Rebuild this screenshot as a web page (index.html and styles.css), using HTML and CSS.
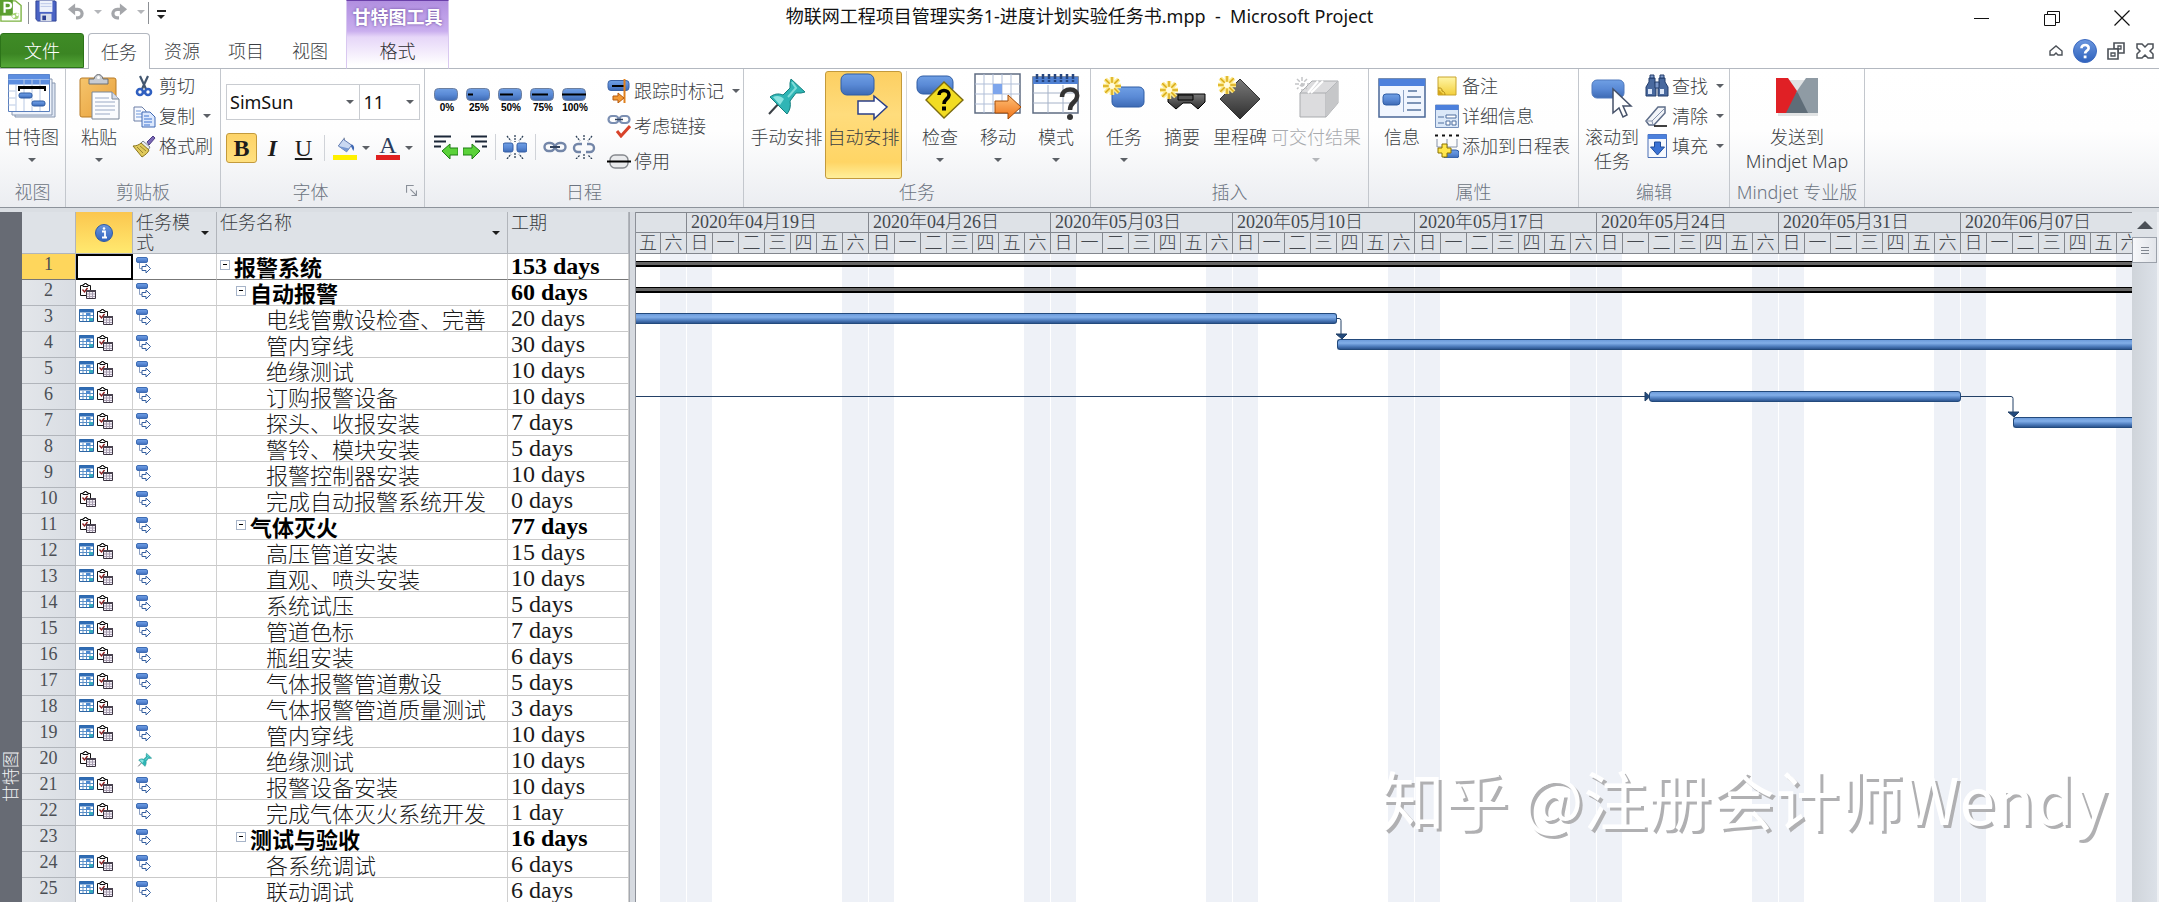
FILE: index.html
```html
<!DOCTYPE html>
<html lang="zh-CN">
<head>
<meta charset="utf-8">
<title>物联网工程项目管理实务1-进度计划实验任务书.mpp - Microsoft Project</title>
<link rel="stylesheet" href="styles.css">
</head>
<body>
<svg class="sprite" aria-hidden="true">
  <defs>
    <linearGradient id="gBlue" x1="0" y1="0" x2="0" y2="1"><stop offset="0" stop-color="#6f9fe4"/><stop offset=".5" stop-color="#5a8ad6"/><stop offset="1" stop-color="#3d6ab4"/></linearGradient>
    <linearGradient id="gPaste" x1="0" y1="0" x2="1" y2="1"><stop offset="0" stop-color="#f6c56c"/><stop offset="1" stop-color="#e79f3a"/></linearGradient>
    <linearGradient id="gYellow" x1="0" y1="0" x2="0" y2="1"><stop offset="0" stop-color="#fff6a8"/><stop offset="1" stop-color="#f3cf3b"/></linearGradient>
    <linearGradient id="gOrange" x1="0" y1="0" x2="0" y2="1"><stop offset="0" stop-color="#ffc27a"/><stop offset="1" stop-color="#ee7218"/></linearGradient>
    <linearGradient id="gDark" x1="0" y1="0" x2="0" y2="1"><stop offset="0" stop-color="#7a7a7a"/><stop offset="1" stop-color="#2e2e2e"/></linearGradient>
    <linearGradient id="gHelp" x1="0" y1="0" x2="0" y2="1"><stop offset="0" stop-color="#6b97df"/><stop offset="1" stop-color="#2f62bd"/></linearGradient>
  </defs>
  <symbol id="spark" viewBox="0 0 16 16"><path d="M8 0v16M0 8h16M2 2l12 12M14 2L2 14" stroke="#fbe88a" stroke-width="4"/><path d="M8 0v5M8 11v5M0 8h5M11 8h5M2 2l4 4M10 10l4 4M14 2l-4 4M6 10l-4 4" stroke="#d9a916" stroke-width="1.3"/><circle cx="8" cy="8" r="2.6" fill="#fffbe0"/></symbol>
  <symbol id="i-logo" viewBox="0 0 24 24"><path d="M1 1h16l6 5v17H1z" fill="#fff" stroke="#7cb342" stroke-width="1.5"/><path d="M0 0h14v17H0z" fill="#5b9e30"/><path d="M5 14V3h4a3 3 0 0 1 0 6H5" fill="none" stroke="#fff" stroke-width="2.4"/><path d="M12 17c2-3 6-4 9-2l-1 5c-3 2-7 1-8-3z" fill="#a6d276"/><circle cx="15" cy="18" r="1.6" fill="#fff"/><circle cx="19" cy="16" r="1.5" fill="#fff"/></symbol>
  <symbol id="i-save" viewBox="0 0 24 24"><path d="M1 1h21l1 1v21H3l-2-2z" fill="#4a63c4" stroke="#2c3f92"/><path d="M5 1h14v12H5z" fill="#eef2fb"/><path d="M6 4h12M6 7h12" stroke="#b9c5e6"/><path d="M6 15h12v8H6z" fill="#d9deea"/><path d="M8 17h4v5H8z" fill="#2c3f92"/></symbol>
  <symbol id="i-undo" viewBox="0 0 20 20"><path d="M6 7h6a4.500 4.500 0 0 1 0 9.500h-2" fill="none" stroke="#a4a6aa" stroke-width="3.600"/><path d="M1 7l8-6.500v13z" fill="#a4a6aa"/></symbol>
  <symbol id="i-redo" viewBox="0 0 20 20"><path d="M14 7H8a4.500 4.500 0 0 0 0 9.500h2" fill="none" stroke="#a4a6aa" stroke-width="3.600"/><path d="M19 7l-8-6.500v13z" fill="#a4a6aa"/></symbol>
  <symbol id="i-min" viewBox="0 0 16 16"><path d="M0 8.500h15" stroke="#111"/></symbol>
  <symbol id="i-max" viewBox="0 0 16 16"><path d="M.5 4.500h11v11H.5zM3.500 4V1.500h12v11H12" fill="none" stroke="#111"/></symbol>
  <symbol id="i-close" viewBox="0 0 16 16"><path d="M.5.5l15 15M15.500.5l-15 15" stroke="#111" stroke-width="1.200"/></symbol>
  <symbol id="i-up" viewBox="0 0 16 16"><path d="M2 8l6-5 6 5v4h-4L8 10l-2 2H2z" fill="#fff" stroke="#4c5158" stroke-width="1.400"/></symbol>
  <symbol id="i-help" viewBox="0 0 24 24"><circle cx="12" cy="12" r="11.500" fill="url(#gHelp)" stroke="#3c6ac0"/><path d="M8.500 9.300C8.500 4.800 16 5 15.600 9.300c-.3 2.400-3.500 2.400-3.500 5.200" fill="none" stroke="#fff" stroke-width="2.700"/><rect x="10.700" y="16.500" width="2.800" height="2.800" fill="#fff"/></symbol>
  <symbol id="i-rest" viewBox="0 0 20 20"><path d="M8 2h10v10h-6V8H8z" fill="#fff" stroke="#4c5158" stroke-width="1.600"/><path d="M2 8h10v10H2z" fill="#fff" stroke="#4c5158" stroke-width="1.600"/><path d="M5 12h4v3H5zM12 5h3v3h-3z" fill="none" stroke="#4c5158" stroke-width="1.300"/></symbol>
  <symbol id="i-x" viewBox="0 0 20 20"><path d="M2 3h5l3 3 3-3h5v4l-3 3 3 3v4h-5l-3-3-3 3H2v-4l3-3-3-3z" fill="#fff" stroke="#4c5158" stroke-width="1.500"/></symbol>
  <symbol id="i-gantt" viewBox="0 0 48 48"><path d="M7 10h40v34H7z" fill="#dfe7f4" stroke="#8897b0"/><path d="M4 6h40v36H4z" fill="#eef3fb" stroke="#8897b0"/><path d="M.5 1.500h41v37H.5z" fill="#fff" stroke="#5a7fbd"/><path d="M.5 1.500h41v10H.5z" fill="#5d8ee0"/><path d="M.5 6.500h41" stroke="#9cbcf0"/><path d="M8 12v26M16 6v32M24 6v32M32 6v32M.5 18h7M.5 25h7M.5 32h7" stroke="#b9c9e4"/><path d="M11 13h27v3H11z"/><path d="M11 13v5M37 13v5" stroke="#000" stroke-width="2"/><rect x="11" y="20" width="13" height="5" rx="2" fill="url(#gBlue)" stroke="#2f5da5"/><rect x="24" y="28" width="13" height="5" rx="2" fill="url(#gBlue)" stroke="#2f5da5"/></symbol>
  <symbol id="i-paste" viewBox="0 0 48 48"><rect x="5" y="5" width="36" height="39" rx="2" fill="url(#gPaste)" stroke="#b77b26"/><path d="M14 9V6h5c1-6 8-6 9 0h5v5H14z" fill="#c8ccd2" stroke="#6d7075"/><circle cx="23.500" cy="4.500" r="1.500" fill="#fff"/><path d="M17 19h20l7 7v20H17z" fill="#fbfcfe" stroke="#7b8798"/><path d="M37 19v7h7" fill="#d5dcea" stroke="#7b8798"/><path d="M20 25h14M20 29h20M20 33h20M20 37h20M20 41h15" stroke="#9aa9c4"/></symbol>
  <symbol id="i-cut" viewBox="0 0 24 24"><path d="M8 2l6 13M16 2l-6 13" stroke="#42566f" stroke-width="2.200"/><circle cx="8" cy="18" r="3" fill="none" stroke="#2f5fc0" stroke-width="2.600"/><circle cx="16" cy="18" r="3" fill="none" stroke="#2f5fc0" stroke-width="2.600"/></symbol>
  <symbol id="i-copy" viewBox="0 0 24 24"><path d="M2 3h8l4 4v10H2z" fill="#f6f9ff" stroke="#6c7fa6"/><path d="M4 7h5M4 10h7M4 13h7" stroke="#6f97da"/><path d="M10 8h8l5 5v10H10z" fill="#dce8fd" stroke="#3e68b4"/><path d="M12 12h5M12 15h8M12 18h8M12 21h6" stroke="#3e74d0"/></symbol>
  <symbol id="i-brush" viewBox="0 0 24 24"><path d="M15 8l6-6 2 2-6 7z" fill="#7a68b5" stroke="#4d3d85"/><path d="M11 7l7 6-2 3-8-6z" fill="#e9ecf2" stroke="#7d8590"/><path d="M9 9l8 7c-1 3-4 5-7 7L1 12c3 0 6-1 8-3z" fill="#e0ca5c" stroke="#8b7620"/><path d="M5 13l6 6M8 12l6 5" stroke="#9a8530"/></symbol>
  <symbol id="i-fill" viewBox="0 0 24 24"><path d="M11 2v8" stroke="#6d7c95" stroke-width="1.500"/><path d="M10 4l10 7-6 8-10-7z" fill="#c9d8f2" stroke="#4a67a4"/><path d="M20 10c4 2 3 6 2 8l-3-6z" fill="#3e68b4"/><path d="M4 12l10 7 3-4z" fill="#7798d2"/></symbol>
  <symbol id="i-pill" viewBox="0 0 24 14"><rect x=".5" y=".5" width="23" height="12" rx="4" fill="url(#gBlue)" stroke="#6c7f9f"/></symbol>
  <symbol id="i-out" viewBox="0 0 24 24"><path d="M0 1.500h17M0 6.500h12M0 11.500h7" stroke="#1b2738" stroke-width="2"/><path d="M8 16l8-7v4h8v7h-8v4z" fill="#5bd23a" stroke="#1f7d15"/></symbol>
  <symbol id="i-in" viewBox="0 0 24 24"><path d="M8 1.500h16M12 6.500h12M19 11.500h5" stroke="#1b2738" stroke-width="2"/><path d="M17 16L9 9v4H0v7h9v4z" fill="#5bd23a" stroke="#1f7d15"/></symbol>
  <symbol id="i-split" viewBox="0 0 24 24"><rect x="0" y="8" width="10" height="9" rx="2" fill="url(#gBlue)" stroke="#345fa6"/><rect x="14" y="8" width="10" height="9" rx="2" fill="url(#gBlue)" stroke="#345fa6"/><path d="M12 0v7M12 18v6M4 1l4 5M20 1l-4 5M4 24l4-5M20 24l-4-5" stroke="#2d4057" stroke-width="1.300" stroke-dasharray="2 1"/></symbol>
  <symbol id="i-link" viewBox="0 0 24 12"><rect x="1.500" y="2" width="10" height="8" rx="4" fill="none" stroke="#7386a8" stroke-width="2.400"/><rect x="12.500" y="2" width="10" height="8" rx="4" fill="none" stroke="#7386a8" stroke-width="2.400"/><path d="M7 6h10" stroke="#31435f" stroke-width="2"/></symbol>
  <symbol id="i-unlink" viewBox="0 0 24 24"><path d="M9 17H6a4 4 0 0 1 0-8h4M14 17h4a4 4 0 0 0 0-8h-3" fill="none" stroke="#7386a8" stroke-width="2.400"/><path d="M12 0v6M12 19v5M4 1l4 5M20 1l-4 5M4 24l4-4M20 24l-4-4" stroke="#2d4057" stroke-width="1.300" stroke-dasharray="2 1"/></symbol>
  <symbol id="i-track" viewBox="0 0 24 24"><rect x="1" y="1.500" width="21" height="10" rx="3" fill="url(#gBlue)" stroke="#3c64a7"/><path d="M5 7h12" stroke="#000" stroke-width="2"/><path d="M17.500 0v24" stroke="#e0801d" stroke-width="2"/><path d="M6 17h5v-3l6 5-6 5v-3H6z" fill="#f39a35" stroke="#b75a0c"/></symbol>
  <symbol id="i-respect" viewBox="0 0 24 24"><rect x="1.500" y="2" width="10" height="7" rx="3.500" fill="none" stroke="#7b8fb2" stroke-width="2.200"/><rect x="12.500" y="2" width="10" height="7" rx="3.500" fill="none" stroke="#7b8fb2" stroke-width="2.200"/><path d="M8 5.500h8" stroke="#31435f" stroke-width="1.500"/><path d="M10 17l4 5 9-10" fill="none" stroke="#d8432a" stroke-width="3"/></symbol>
  <symbol id="i-inactive" viewBox="0 0 24 24"><rect x="3" y="6" width="18" height="13" rx="5" fill="#e9eaec" stroke="#85888d" stroke-width="1.400"/><path d="M0 12.500h24" stroke="#000" stroke-width="2"/></symbol>
  <symbol id="i-pin" viewBox="0 0 48 48"><path d="M6 41l12-13" stroke="#3a3f45" stroke-width="2"/><path d="M28 6l14 13-4 1-5 0-6 8c1 5 0 9-3 13L7 24c4-3 8-4 13-2l7-7 0-5z" fill="#2fb5b5" stroke="#14807f"/><path d="M10 24c4-2 8-1 11 2l-4 6z" fill="#8be3e0"/><path d="M29 9l4 6-8 9" stroke="#7fdcd9" stroke-width="2" fill="none"/></symbol>
  <symbol id="i-auto" viewBox="0 0 48 48"><rect x="1" y="1" width="33" height="21" rx="6" fill="url(#gBlue)" stroke="#2f5da5"/><path d="M18 28h16v-5l13 11-13 12v-5H18z" fill="#fff" stroke="#2b3f88" stroke-width="1.500"/></symbol>
  <symbol id="i-check" viewBox="0 0 48 48"><rect x="1" y="3" width="36" height="18" rx="6" fill="url(#gBlue)" stroke="#2f5da5"/><path d="M28 9l19 18-19 18L10 27z" fill="#f2dc22" stroke="#7d6c10" stroke-width="1.400"/><path d="M23 22c0-6 10-6 10 0 0 4-5 4-5 9" fill="none" stroke="#000" stroke-width="3.600"/><rect x="26" y="33.500" width="4" height="4"/></symbol>
  <symbol id="i-move" viewBox="0 0 48 48"><path d="M1 1h45v39H1z" fill="#fff" stroke="#5f6c82" stroke-width="1.500"/><path d="M10 1v39M19 1v39M28 1v39M37 1v39M1 11h45M1 21h45M1 31h45" stroke="#b1bfd8"/><path d="M19 11h9v10h-9z" fill="#7da5ec"/><path d="M21 28h13v-6l13 12-13 12v-6H21z" fill="url(#gOrange)" stroke="#a34c08"/></symbol>
  <symbol id="i-mode" viewBox="0 0 48 48"><path d="M1 4h45v36H1z" fill="#fff" stroke="#5f6c82" stroke-width="1.500"/><path d="M1 4h45v7H1z" fill="#4f80d2"/><path d="M5 1v8M11 1v8M17 1v8M23 1v8M29 1v8M35 1v8M41 1v8" stroke="#25457f" stroke-width="2.500" stroke-dasharray="5 1"/><path d="M16 12v28M31 12v28M1 20h45M1 30h45" stroke="#a5b2c8"/><path d="M30 24c0-10 17-10 15 0-1 6-7 5-7 13" fill="none" stroke="#333" stroke-width="4.500"/><circle cx="38" cy="44" r="3" fill="#333"/></symbol>
  <symbol id="i-task" viewBox="0 0 48 48"><rect x="12" y="14" width="32" height="20" rx="5" fill="url(#gBlue)" stroke="#2f5da5"/><use href="#spark" x="3" y="4" width="18" height="18"/></symbol>
  <symbol id="i-sum" viewBox="0 0 48 48"><path d="M10 21h37v8l-7 7-7-6h-8l-7 6-8-7z" fill="url(#gDark)" stroke="#000"/><path d="M20 22h15v5H20z" fill="#555" stroke="#000"/><use href="#spark" x="2" y="8" width="18" height="18"/></symbol>
  <symbol id="i-mile" viewBox="0 0 48 48"><path d="M24 6l20 20-20 20L4 26z" fill="url(#gDark)" stroke="#333"/><use href="#spark" x="2" y="3" width="18" height="18"/></symbol>
  <symbol id="i-deliv" viewBox="0 0 48 48"><path d="M8 20L20 8h26v22L34 44H8z" fill="#dcdcde" stroke="#a9abae"/><path d="M8 20h26v24M34 20L46 8" fill="none" stroke="#a9abae"/><path d="M34 20L46 8v22L34 44z" fill="#c6c7c9"/><path d="M19 20L31 8M26 8l-10 12" stroke="#fff" stroke-width="2"/><path d="M10 4v14M3 11h14M5 6l10 10M15 6L5 16" stroke="#c4c5c7" stroke-width="1.500" stroke-dasharray="4 2"/></symbol>
  <symbol id="i-info" viewBox="0 0 48 48"><path d="M1 6h46v38H1z" fill="#f1f6fe" stroke="#4a6797" stroke-width="1.500"/><path d="M1 6h46v7H1z" fill="#4c80dc"/><rect x="5" y="21" width="17" height="11" rx="3" fill="url(#gBlue)" stroke="#2f5da5"/><path d="M25.500 17v22" stroke="#8fa4c4"/><path d="M30 18h9M29 24h14M29 30h14M29 37h14" stroke="#55749f" stroke-width="1.500"/></symbol>
  <symbol id="i-note" viewBox="0 0 24 24"><path d="M3 3h18v18H3z" fill="url(#gYellow)" stroke="#c8a42c"/><path d="M3 15l6 6H3z" fill="#d2a51d"/><path d="M3 14c3 0 4 0 4 3 2 0 3 2 3 4" fill="none" stroke="#b18a16"/></symbol>
  <symbol id="i-detail" viewBox="0 0 24 24"><path d="M.5 1h23v22.500H.5z" fill="#dbe8f8" stroke="#7691bb"/><path d="M.5 1h23v5H.5z" fill="#4c80dc"/><path d="M3 13h6M3 19h6" stroke="#4f6f9f"/><path d="M11 11h10v3H11zM11 17h4v4h-4zM17 17h4v4h-4z" fill="#fff" stroke="#4f6f9f"/></symbol>
  <symbol id="i-addtl" viewBox="0 0 24 24"><path d="M0 1.500h24" stroke="#111" stroke-width="2" stroke-dasharray="3 4"/><path d="M2 5v8h20V5M12 5v8" fill="none" stroke="#8592a8"/><rect x="8" y="16" width="16" height="8" rx="3" fill="url(#gBlue)" stroke="#2f5da5"/><path d="M7 10h5v4h4v5h-4v4H7v-4H3v-5h4z" fill="#ffe64d" stroke="#8a7300"/></symbol>
  <symbol id="i-scroll" viewBox="0 0 48 48"><rect x="4" y="7" width="32" height="18" rx="5" fill="url(#gBlue)" stroke="#4f79bd"/><path d="M25 16v24l6-5 4 9 4-2-4-9h8z" fill="#fff" stroke="#465269" stroke-width="1.500"/></symbol>
  <symbol id="i-find" viewBox="0 0 24 24"><path d="M4 4h6v5l1 4v9H1v-9l3-5zM14 4h6v4l3 5v9H13v-9l1-4z" fill="#49699e" stroke="#233d6b"/><path d="M5 1h4v3H5zM15 1h4v3h-4zM10 8h4v6h-4z" fill="#7c98c9" stroke="#233d6b"/><path d="M3 15h4v5H3zM15 15h4v5h-4z" fill="#dce7f8"/></symbol>
  <symbol id="i-erase" viewBox="0 0 24 24"><path d="M1 17L13 3h7v6L9 21H4z" fill="#f2f4f8" stroke="#5e6d88" stroke-width="1.500"/><path d="M1 17h6L20 4M7 17l1 4" fill="none" stroke="#8593ac"/><path d="M9 22h13" stroke="#000" stroke-width="1.500"/></symbol>
  <symbol id="i-filld" viewBox="0 0 24 24"><path d="M3 .5h18.500v23H3z" fill="#f6f9fe" stroke="#4a6fb4"/><path d="M3 .5h18.500V5H3z" fill="#4c80dc"/><path d="M9.500 8h6v5h4l-7 8-7-8h4z" fill="#3a72d4" stroke="#1f4c9c"/></symbol>
  <symbol id="i-mind" viewBox="0 0 48 48"><path d="M5 7h40v36H5z" fill="#c3c7ca" opacity=".5"/><path d="M3 5h12l9 13-6 22H3z" fill="#e02025"/><path d="M45 5H33l-9 13 6 22h15z" fill="#8f9ba4"/><path d="M24 18l11 22H13z" fill="#5f6d78"/></symbol>
  <symbol id="t-info" viewBox="0 0 18 18"><circle cx="9" cy="9" r="8.500" fill="url(#gHelp)" stroke="#2f5aa5"/><path d="M7 7.500h3V13M7 13.500h5" stroke="#fff" stroke-width="1.800" fill="none"/><circle cx="9" cy="4.500" r="1.300" fill="#fff"/></symbol>
  <symbol id="t-cal" viewBox="0 0 15 13"><path d="M.5.5h14v12H.5z" fill="#fff" stroke="#2c65a5"/><path d="M.5.5h14v3H.5z" fill="#2f6cb5"/><path d="M4 4v8M7.500 4v8M11 4v8M1 6.500h13M1 9.500h13" stroke="#5c90c8"/><path d="M7 4h4v3H7z" fill="#4d8ad0"/><path d="M10 9h4v3h-4z" fill="#35a9bb"/></symbol>
  <symbol id="t-clip" viewBox="0 0 17 16"><path d="M1.500 2.500h10v10h-10z" fill="#fff" stroke="#111"/><path d="M4 3.500V1.500h1.500V.5h2v1H9v2z" fill="#fff" stroke="#111"/><path d="M3.500 6.500l2 2.500 3-4" fill="none" stroke="#8b1b1b" stroke-width="1.300"/><path d="M7.500 7.500h9v8h-9z" fill="#f4f0f7" stroke="#3a3340"/><path d="M10.500 8v7M13.500 8v7M8 11h8M8 13.500h8" stroke="#a79db0"/><path d="M7 7h10v2H7z" fill="#4a4350"/></symbol>
  <symbol id="t-auto" viewBox="0 0 15 17"><rect x=".5" y=".5" width="11" height="5" rx="1.500" fill="url(#gBlue)" stroke="#3f6db4"/><path d="M3.500 6v5.500H7" fill="none" stroke="#8b9fc2"/><path d="M6 9.500h4V7l4.500 4.500L10 16v-2.500H6z" fill="#fff" stroke="#355f9f"/></symbol>
</svg>

<div class="app">
  <header class="top">
    <h1 class="title">物联网工程项目管理实务1-进度计划实验任务书.mpp&nbsp; - &nbsp;Microsoft Project</h1>
    <div class="qat">
      <svg class="s22"><use href="#i-logo"/></svg>
      <span class="qat-sep"></span>
      <button class="plain" aria-label="保存"><svg class="s22"><use href="#i-save"/></svg></button>
      <button class="plain qat-btn undo" aria-label="撤销"><svg class="s18"><use href="#i-undo"/></svg><i class="arrow faint"></i></button>
      <button class="plain qat-btn redo" aria-label="恢复"><svg class="s18"><use href="#i-redo"/></svg><i class="arrow faint"></i></button>
      <span class="qat-sep"></span>
      <button class="plain qat-more" aria-label="自定义快速访问工具栏"><i class="arrow"></i></button>
    </div>
    <nav class="tabs">
      <button class="tab file">文件</button>
      <button class="tab active">任务</button>
      <button class="tab">资源</button>
      <button class="tab">项目</button>
      <button class="tab">视图</button>
    </nav>
    <div class="context">
      <span class="context-name">甘特图工具</span>
      <button class="tab context-tab">格式</button>
    </div>
    <div class="winbtns">
      <button class="plain" aria-label="最小化"><svg class="s16"><use href="#i-min"/></svg></button>
      <button class="plain" aria-label="还原"><svg class="s16"><use href="#i-max"/></svg></button>
      <button class="plain" aria-label="关闭"><svg class="s16"><use href="#i-close"/></svg></button>
    </div>
    <div class="docbtns">
      <button class="plain" aria-label="折叠功能区"><svg class="s16"><use href="#i-up"/></svg></button>
      <button class="plain" aria-label="帮助"><svg class="s24"><use href="#i-help"/></svg></button>
      <button class="plain" aria-label="还原窗口"><svg class="s20"><use href="#i-rest"/></svg></button>
      <button class="plain" aria-label="关闭窗口"><svg class="s20"><use href="#i-x"/></svg></button>
    </div>
  </header>

  <div class="ribbon">
    <section class="group g-view">
      <div class="tools">
        <button class="big"><svg class="s48"><use href="#i-gantt"/></svg><span>甘特图</span><i class="arrow"></i></button>
      </div>
      <h2>视图</h2>
    </section>
    <section class="group g-clip">
      <div class="tools">
        <button class="big"><svg class="s48"><use href="#i-paste"/></svg><span>粘贴</span><i class="arrow"></i></button>
        <div class="list">
          <button class="small"><svg class="s24"><use href="#i-cut"/></svg>剪切</button>
          <button class="small"><svg class="s24"><use href="#i-copy"/></svg>复制<i class="arrow"></i></button>
          <button class="small"><svg class="s24"><use href="#i-brush"/></svg>格式刷</button>
        </div>
      </div>
      <h2>剪贴板</h2>
    </section>
    <section class="group g-font">
      <div class="font-tools">
        <div class="combos">
          <label class="combo family"><select aria-label="字体"><option>SimSun</option></select><i class="arrow"></i></label>
          <label class="combo size"><select aria-label="字号"><option>11</option></select><i class="arrow"></i></label>
        </div>
        <div class="styles">
          <button class="fmt bold on">B</button>
          <button class="fmt ital">I</button>
          <button class="fmt under">U</button>
          <span class="vsep"></span>
          <button class="fmt color"><span class="swatch yellow"><svg class="s20"><use href="#i-fill"/></svg></span><i class="arrow"></i></button>
          <button class="fmt color"><span class="swatch red">A</span><i class="arrow"></i></button>
        </div>
      </div>
      <h2>字体</h2>
      <svg class="launcher" viewBox="0 0 10 10"><path d="M.5 7V.5H7M4 4l5 5M9.500 5v4.500H5" fill="none" stroke="#8a9099"/></svg>
    </section>
    <section class="group g-sched">
      <div class="tools">
        <div class="sched">
          <div class="pcts">
            <button class="pct"><svg viewBox="0 0 24 14"><use href="#i-pill"/></svg>0%</button>
            <button class="pct"><svg viewBox="0 0 24 14"><use href="#i-pill"/><path d="M2 6.500h5" stroke="#000" stroke-width="2"/></svg>25%</button>
            <button class="pct"><svg viewBox="0 0 24 14"><use href="#i-pill"/><path d="M2 6.500h13" stroke="#000" stroke-width="2"/></svg>50%</button>
            <button class="pct"><svg viewBox="0 0 24 14"><use href="#i-pill"/><path d="M2 6.500h16" stroke="#000" stroke-width="2"/></svg>75%</button>
            <button class="pct"><svg viewBox="0 0 24 14"><use href="#i-pill"/><path d="M0 6.500h24" stroke="#000" stroke-width="2"/></svg>100%</button>
          </div>
          <div class="links">
            <button class="plain" aria-label="降级"><svg class="s24"><use href="#i-out"/></svg></button>
            <button class="plain" aria-label="升级"><svg class="s24"><use href="#i-in"/></svg></button>
            <span class="vsep"></span>
            <button class="plain" aria-label="拆分任务"><svg class="s24"><use href="#i-split"/></svg></button>
            <span class="vsep"></span>
            <button class="plain" aria-label="链接任务"><svg class="s24"><use href="#i-link"/></svg></button>
            <button class="plain" aria-label="取消链接"><svg class="s24"><use href="#i-unlink"/></svg></button>
          </div>
        </div>
        <div class="list loose">
          <button class="small"><svg class="s24"><use href="#i-track"/></svg>跟踪时标记<i class="arrow"></i></button>
          <button class="small"><svg class="s24"><use href="#i-respect"/></svg>考虑链接</button>
          <button class="small"><svg class="s24"><use href="#i-inactive"/></svg>停用</button>
        </div>
      </div>
      <h2>日程</h2>
    </section>
    <section class="group g-task">
      <div class="tools">
        <button class="big wide"><svg class="s48"><use href="#i-pin"/></svg><span>手动安排</span></button>
        <button class="big wide on"><svg class="s48"><use href="#i-auto"/></svg><span>自动安排</span></button>
        <span class="tall-sep"></span>
        <button class="big"><svg class="s48"><use href="#i-check"/></svg><span>检查</span><i class="arrow"></i></button>
        <button class="big"><svg class="s48"><use href="#i-move"/></svg><span>移动</span><i class="arrow"></i></button>
        <button class="big"><svg class="s48"><use href="#i-mode"/></svg><span>模式</span><i class="arrow"></i></button>
      </div>
      <h2>任务</h2>
    </section>
    <section class="group g-insert">
      <div class="tools">
        <button class="big"><svg class="s48"><use href="#i-task"/></svg><span>任务</span><i class="arrow"></i></button>
        <button class="big"><svg class="s48"><use href="#i-sum"/></svg><span>摘要</span></button>
        <button class="big"><svg class="s48"><use href="#i-mile"/></svg><span>里程碑</span></button>
        <button class="big widest" disabled><svg class="s48"><use href="#i-deliv"/></svg><span>可交付结果</span><i class="arrow faint"></i></button>
      </div>
      <h2>插入</h2>
    </section>
    <section class="group g-prop">
      <div class="tools">
        <button class="big"><svg class="s48"><use href="#i-info"/></svg><span>信息</span></button>
        <div class="list">
          <button class="small"><svg class="s24"><use href="#i-note"/></svg>备注</button>
          <button class="small"><svg class="s24"><use href="#i-detail"/></svg>详细信息</button>
          <button class="small"><svg class="s24"><use href="#i-addtl"/></svg>添加到日程表</button>
        </div>
      </div>
      <h2>属性</h2>
    </section>
    <section class="group g-edit">
      <div class="tools">
        <button class="big"><svg class="s48"><use href="#i-scroll"/></svg><span>滚动到<br>任务</span></button>
        <div class="list">
          <button class="small"><svg class="s24"><use href="#i-find"/></svg>查找<i class="arrow"></i></button>
          <button class="small"><svg class="s24"><use href="#i-erase"/></svg>清除<i class="arrow"></i></button>
          <button class="small"><svg class="s24"><use href="#i-filld"/></svg>填充<i class="arrow"></i></button>
        </div>
      </div>
      <h2>编辑</h2>
    </section>
    <section class="group g-mind">
      <div class="tools">
        <button class="big full"><svg class="s48"><use href="#i-mind"/></svg><span>发送到<br>Mindjet Map</span></button>
      </div>
      <h2>Mindjet 专业版</h2>
    </section>
  </div>

  <main class="work">
    <div class="viewbar"><span>甘特图</span></div>
    <div class="sheet">
      <table class="grid">
        <colgroup><col class="c-id"><col class="c-ind"><col class="c-mode"><col class="c-name"><col class="c-dur"></colgroup>
        <thead>
          <tr>
            <th></th>
            <th class="ind-head"><svg class="s18" role="img" aria-label="标记"><use href="#t-info"/></svg></th>
            <th><div class="head"><span>任务模式</span><i class="arrow dark"></i></div></th>
            <th><div class="head"><span>任务名称</span><i class="arrow dark"></i></div></th>
            <th><div class="head"><span>工期</span></div></th>
          </tr>
        </thead>
        <tbody id="rows"></tbody>
      </table>
    </div>
    <div class="splitter"></div>
    <div class="chart">
      <div class="timescale" id="timescale"></div>
      <div class="canvas" id="canvas">
        <svg class="connectors">
          <path d="M701 64.500h2q2 0 2 2V82"/><path class="tip" d="M700 80h11l-5 5z"/>
          <path d="M0 142.500h1009"/><path class="tip" d="M1009 138l5 4.500-5 4.500z"/>
          <path d="M1325 142.500h50q2 0 2 2V160"/><path class="tip" d="M1372 158h11l-5 5z"/>
        </svg>
      </div>
      <div class="watermark">知乎 @注册会计师Wendy</div>
    </div>
    <div class="scroll">
      <button class="scroll-up" aria-label="向上滚动"></button>
      <div class="thumb"></div>
    </div>
  </main>
</div>
<script src="app.js"></script>
</body>
</html>
```

FILE: styles.css
```css
* { box-sizing: border-box; }
body {
  margin: 0;
  overflow: hidden;
  background: #fff;
  color: #3a3d42;
  font: 300 18px/24px "Noto Sans", "Noto Sans CJK SC", sans-serif;
}
button, select { font: inherit; color: inherit; background: none; border: 0; padding: 0; margin: 0; }
button { white-space: nowrap; }
svg { display: block; flex: none; }
h1, h2 { margin: 0; font: inherit; }
.sprite { position: absolute; width: 0; height: 0; }
.s16 { width: 16px; height: 16px; }
.s18 { width: 18px; height: 18px; }
.s20 { width: 20px; height: 20px; }
.s22 { width: 22px; height: 22px; }
.s24 { width: 24px; height: 24px; }
.s48 { width: 48px; height: 48px; }
.plain { display: flex; align-items: center; justify-content: center; }
.arrow {
  flex: none;
  width: 0;
  height: 0;
  border: 4px solid transparent;
  border-top-color: #5c6066;
  border-bottom: 0;
}
.arrow.faint { border-top-color: #b4b6ba; }
.arrow.dark { border-top-color: #1c1c1c; }

.app { display: flex; flex-direction: column; height: 100vh; }

/* title bar and tabs */
.top {
  flex: none;
  display: grid;
  grid-template-columns: 346px 103px 1fr;
  grid-template-rows: 33px 36px;
}
.title {
  grid-area: 1 / 1 / 2 / -1;
  text-align: center;
  line-height: 32px;
  color: #111;
  font-weight: 400;
}
.qat { grid-area: 1 / 1; display: flex; align-items: flex-start; }
.qat-sep { width: 1px; height: 22px; margin: 2px 6px 0; background: #8c8f94; }
.qat-btn { justify-content: flex-start; width: 38px; gap: 9px; height: 24px; }
.qat-btn.undo { margin-left: 10px; }
.qat-btn.redo { margin-left: 5px; }
.qat-btn + .qat-sep { margin-left: 0; }
.qat-more { width: 12px; height: 20px; margin: 4px 0 0; border-top: 0; flex-direction: column; gap: 3px; }
.qat-more::before { content: ""; width: 9px; height: 2px; background: #222; }
.qat-more .arrow { border-top-color: #222; }
.tabs { grid-area: 2 / 1 / 3 / 2; display: flex; border-bottom: 1px solid #b3b8c0; }
.tab { width: 64px; height: 35px; line-height: 37px; }
.tab.file {
  width: 84px;
  margin-right: 4px;
  color: #fff;
  line-height: 34px;
  border-radius: 3px 3px 0 0;
  border: 1px solid #2c7419;
  background: linear-gradient(#3f8b26, #3b8523 60%, #55a838);
}
.tab.active {
  width: 62px;
  height: 36px;
  background: #fff;
  border: 1px solid #b3b8c0;
  border-bottom: 0;
  border-radius: 4px 4px 0 0;
}
.context {
  grid-area: 1 / 2 / 3 / 3;
  display: flex;
  flex-direction: column;
  align-items: center;
  border-top: 1px solid #6a3fa8;
  border-bottom: 1px solid #b3b8c0;
  border-left: 1px solid #d9c8f0;
  border-right: 1px solid #d9c8f0;
  background: linear-gradient(#b18fe0, #c9aeee 30px, #e6d6f8 36px, #fff 64px);
}
.context-name { height: 33px; line-height: 32px; color: #fff; font-weight: 700; text-shadow: 0 0 3px #6a4a9c; }
.context-tab { color: #2f2f33; }
.winbtns { grid-area: 1 / 3; justify-self: end; display: flex; padding: 2px 2px 0 0; }
.winbtns .plain { width: 70px; }
.docbtns {
  grid-area: 2 / 3;
  display: flex;
  justify-content: flex-end;
  gap: 9px;
  padding-right: 4px;
  border-bottom: 1px solid #b3b8c0;
}

/* ribbon */
.ribbon {
  flex: none;
  display: flex;
  height: 138px;
  background: linear-gradient(#fff, #fefefe 45%, #ebedf1);
}
.group {
  position: relative;
  flex: none;
  display: flex;
  flex-direction: column;
  justify-content: space-between;
  border-right: 1px solid #c3c7cd;
}
.group h2 { height: 28px; line-height: 27px; text-align: center; color: #6c7481; white-space: nowrap; }
.g-view { width: 66px; }
.g-clip { width: 155px; }
.g-font { width: 204px; }
.g-font h2 { padding-right: 24px; }
.g-sched { width: 319px; }
.g-task { width: 347px; }
.g-insert { width: 278px; }
.g-prop { width: 210px; }
.g-edit { width: 151px; }
.g-mind { width: 135px; }
.tools { display: flex; padding: 2px 4px 0; }
.g-view .tools { padding-left: 3px; }
.g-mind .tools { padding: 2px 0 0; }
.big {
  flex: none;
  display: flex;
  flex-direction: column;
  align-items: center;
  width: 58px;
  height: 108px;
  padding-top: 1px;
  border: 1px solid transparent;
  border-radius: 3px;
}
.big span { margin-top: 4px; }
.big .arrow { margin-top: 9px; }
.big.wide { width: 77px; }
.big.widest { width: 94px; color: #a7a9ad; }
.big.full { width: 134px; }
.big.on { border-color: #c39a3c; background: linear-gradient(#fccf62, #ffdc7c 40%, #ffd565 85%, #ffef9a); }
.tall-sep { width: 1px; height: 90px; margin: 0 4px; background: #d5d8dc; }
.list { display: flex; flex-direction: column; padding-left: 4px; }
.small { display: flex; align-items: center; gap: 3px; height: 30px; }
.small .arrow { margin-left: 5px; }
.list.loose { gap: 5px; padding: 5px 0 0 11px; }

.font-tools { padding: 15px 4px 0 5px; }
.combos { display: flex; }
.combo {
  display: flex;
  align-items: center;
  height: 36px;
  padding-right: 5px;
  border: 1px solid #c9ccd1;
  background: #fff;
  color: #111;
  font-weight: 400;
}
.combo select { flex: 1; min-width: 0; height: 32px; padding-left: 3px; appearance: none; }
.combo.family { flex: 138; }
.combo.size { flex: 58; border-left: 0; }
.styles { display: flex; align-items: center; padding-top: 13px; }
.fmt {
  width: 31px;
  height: 30px;
  color: #1c1c1c;
  font: 24px/26px "Liberation Serif", serif;
  border: 1px solid transparent;
  border-radius: 3px;
}
.fmt.bold { font-weight: 700; }
.fmt.ital { font-style: italic; font-weight: 700; }
.fmt.under { text-decoration: underline; }
.fmt.on { border-color: #c39a3c; background: linear-gradient(#fdd368, #ffe07f); }
.fmt.color { display: flex; align-items: center; width: 43px; gap: 5px; }
.swatch { display: flex; justify-content: center; width: 24px; height: 24px; line-height: 19px; color: #2b3c5c; border-bottom: 5px solid; }
.swatch.yellow { border-bottom-color: #fff000; }
.swatch.red { border-bottom-color: #e02020; }
.vsep { flex: none; width: 1px; height: 26px; margin: 0 7px 0 5px; background: #d0d3d8; }
.launcher { position: absolute; right: 7px; bottom: 11px; width: 11px; height: 11px; }

.sched { padding: 17px 0 0 5px; }
.pcts { display: flex; align-items: flex-start; gap: 6px; height: 46px; }
.pct { width: 26px; color: #000; font: 700 10px/11px "Liberation Sans", sans-serif; }
.pct svg { width: 24px; height: 14px; }
.links { display: flex; align-items: center; gap: 5px; }
.links .vsep { margin: 0 2px 0 3px; }

/* work area */
.work {
  flex: 1;
  min-height: 0;
  display: flex;
  overflow: hidden;
  border-top: 1px solid #8d939b;
  padding-top: 4px;
  background: #dadee3;
}
.viewbar {
  flex: none;
  width: 22px;
  display: flex;
  align-items: flex-end;
  justify-content: center;
  padding-bottom: 100px;
  background: #676b74;
  color: #f2f3f5;
  font-size: 17px;
}
.viewbar span { writing-mode: vertical-rl; text-orientation: sideways; transform: rotate(180deg); line-height: 22px; }
.sheet { flex: none; width: 608px; background: #fff; border-right: 1px solid #a5a9b0; }
.grid { width: 100%; table-layout: fixed; border-collapse: separate; border-spacing: 0; }
.c-id { width: 54px; }
.c-ind { width: 57px; }
.c-mode { width: 84px; }
.c-name { width: 291px; }
.grid th {
  height: 42px;
  padding: 0;
  font-weight: 300;
  text-align: left;
  background: #dee2e7;
  border-right: 1px solid #b1b5bb;
  border-bottom: 1px solid #b1b5bb;
}
.grid th.ind-head { background: linear-gradient(#fbc64e, #ffe269 80%, #ffe96e); }
.ind-head svg { margin: 0 auto; }
.head { display: flex; align-items: center; justify-content: space-between; height: 41px; padding: 0 7px 0 3px; line-height: 20px; }
.head span { align-self: flex-start; max-width: 56px; word-break: break-all; }
th:nth-child(n+4) .head span { max-width: none; }
.grid td {
  height: 26px;
  padding: 0 0 0 3px;
  border-right: 1px solid #d0d0d0;
  border-bottom: 1px solid #c9c9c9;
  color: #1a1a1a;
}
.grid tbody .id {
  padding: 0 0 4px;
  text-align: center;
  font: 400 18px/21px "Liberation Serif", serif;
  color: #4b4f55;
  background: linear-gradient(90deg, #e3e6ea, #d9dde3);
  border-color: #b1b5bb;
}
.icons { display: flex; gap: 2px; height: 20px; align-items: flex-start; }
.name { display: flex; align-items: center; height: 25px; font-size: 22px; white-space: nowrap; }
.level-2 { padding-left: 16px; }
.level-3 { padding-left: 46px; }
.fold { flex: none; display: flex; align-items: center; width: 10px; height: 10px; margin: 0 4px 4px 0; border: 1px solid #a7b4c8; background: #fff; }
.fold::before { content: ""; width: 4px; height: 1px; margin: auto; background: #000; }
.grid td.dur { font: 400 24px/25px "Liberation Serif", serif; }
.summary .name, .grid .summary td.dur { font-weight: 700; color: #000; }
.clip { width: 17px; height: 16px; }
.cal { width: 15px; height: 13px; }
.mode { width: 15px; height: 17px; }
.grid .current td { border-bottom-color: #777; }
.grid .current .id { background: #fed65c; }
.grid .current .ind { border: 2px solid #000; }

.splitter { flex: none; width: 6px; background: #d6dae0; border-right: 1px solid #8d9199; }
.chart { position: relative; flex: 1; min-width: 0; display: flex; flex-direction: column; overflow: hidden; background: #fff; }
.timescale {
  flex: none;
  display: flex;
  height: 42px;
  background: #dee2e7;
  border-top: 1px solid #83878e;
  border-bottom: 1px solid #83878e;
  color: #44484e;
}
.week { flex: none; width: 182px; }
.week.partial { width: 50px; }
.week-date { height: 20px; padding-left: 4px; line-height: 18px; font-family: "Liberation Serif", "Noto Sans CJK SC", serif; border-left: 1px solid #83878e; border-bottom: 1px solid #83878e; white-space: nowrap; }
.days { display: flex; }
.day { flex: none; width: 26px; height: 20px; line-height: 18px; text-align: center; border-left: 1px solid #83878e; }
.partial .day:first-child { width: 24px; }
.partial .day:first-child, .partial .week-date { border-left: 0; }
.canvas {
  position: relative;
  flex: 1;
  background: repeating-linear-gradient(90deg, #eef1f7 0 26px, #fff 26px 27px, #eef1f7 27px 52px, #fff 52px 182px) 24px 0 / 1820px 100%;
}
.bar {
  position: absolute;
  height: 11px;
  border: 1px solid #234a7c;
  background: linear-gradient(#6d9cdb, #82aee8 35%, #5584c4 65%, #2c5590);
  border-radius: 3px;
}
.bar.from-left { border-left: 0; border-top-left-radius: 0; border-bottom-left-radius: 0; }
.bar.to-right { right: 0; border-right: 0; border-top-right-radius: 0; border-bottom-right-radius: 0; }
.bar.total { height: 6px; border-color: #000; border-bottom-width: 2px; background: #666; border-radius: 0; }
.connectors { position: absolute; inset: 0; width: 100%; height: 100%; fill: none; stroke: #234066; }
.connectors .tip { fill: #234a7c; }
.watermark {
  position: absolute;
  right: 25px;
  bottom: 60px;
  font: 400 64px/90px "Noto Sans CJK SC", sans-serif;
  color: #fff;
  text-shadow: 3px 3px 0 #b0b0b2;
  white-space: nowrap;
}
.scroll { flex: none; width: 27px; border-right: 2px solid #eef0f3; background: linear-gradient(90deg, #cfd4da, #dce1e8); }
.scroll-up { display: flex; align-items: center; justify-content: center; width: 100%; height: 25px; background: #dee2e7; }
.scroll-up::before { content: ""; border: 8px solid transparent; border-bottom-color: #4b5057; border-top: 0; }
.thumb {
  height: 26px;
  border: 1px solid #9ba1aa;
  background: repeating-linear-gradient(#80868f 0 1px, transparent 1px 3px) center / 8px 7px no-repeat, linear-gradient(90deg, #f7f8fa, #e2e5ea);
}
```

FILE: app.js
```
const tasks = [
  [1, '报警系统', '153 days', ''],
  [2, '自动报警', '60 days', 'n'],
  [3, '电线管敷设检查、完善', '20 days', 'cn'],
  [3, '管内穿线', '30 days', 'cn'],
  [3, '绝缘测试', '10 days', 'cn'],
  [3, '订购报警设备', '10 days', 'cn'],
  [3, '探头、收报安装', '7 days', 'cn'],
  [3, '警铃、模块安装', '5 days', 'cn'],
  [3, '报警控制器安装', '10 days', 'cn'],
  [3, '完成自动报警系统开发', '0 days', 'n'],
  [2, '气体灭火', '77 days', 'n'],
  [3, '高压管道安装', '15 days', 'cn'],
  [3, '直观、喷头安装', '10 days', 'cn'],
  [3, '系统试压', '5 days', 'cn'],
  [3, '管道色标', '7 days', 'cn'],
  [3, '瓶组安装', '6 days', 'cn'],
  [3, '气体报警管道敷设', '5 days', 'cn'],
  [3, '气体报警管道质量测试', '3 days', 'cn'],
  [3, '管内穿线', '10 days', 'cn'],
  [3, '绝缘测试', '10 days', 'n', 'manual'],
  [3, '报警设备安装', '10 days', 'cn'],
  [3, '完成气体灭火系统开发', '1 day', 'cn'],
  [2, '测试与验收', '16 days', ''],
  [3, '各系统调试', '6 days', 'cn'],
  [3, '联动调试', '6 days', 'cn'],
];

const icon = (id, cls) => `<svg class="${cls}"><use href="#${id}"/></svg>`;

document.getElementById('rows').innerHTML = tasks.map(([level, name, duration, marks, mode], i) => {
  const cls = [level < 3 ? 'summary' : '', i === 0 ? 'current' : ''].join(' ').trim();
  const ind = (marks.includes('c') ? icon('t-cal', 'cal') : '') + (marks.includes('n') ? icon('t-clip', 'clip') : '');
  const fold = level < 3 ? '<i class="fold"></i>' : '';
  return `<tr class="${cls}"><td class="id">${i + 1}</td>
    <td class="ind"><div class="icons">${ind}</div></td>
    <td><div class="icons">${mode ? icon('i-pin', 's18') : icon('t-auto', 'mode')}</div></td>
    <td><div class="name level-${level}">${fold}${name}</div></td>
    <td class="dur">${duration}</td></tr>`;
}).join('');

const names = ['日', '一', '二', '三', '四', '五', '六'];
const week = (date, days, cls = '') =>
  `<div class="week ${cls}"><div class="week-date">${date}</div><div class="days">${days.map(d => `<span class="day">${d}</span>`).join('')}</div></div>`;
const starts = ['04月19', '04月26', '05月03', '05月10', '05月17', '05月24', '05月31', '06月07'];
document.getElementById('timescale').innerHTML =
  week('', ['五', '六'], 'partial') + starts.map(s => week(`2020年${s}日`, names)).join('');

const ROW = 26;
const bars = [
  { row: 0, from: 0, kind: 'total' },
  { row: 1, from: 0, kind: 'total' },
  { row: 2, from: 0, to: 701 },
  { row: 3, from: 701 },
  { row: 5, from: 1013, to: 1325 },
  { row: 6, from: 1377 },
];
for (const b of bars) {
  const el = document.createElement('div');
  el.className = ['bar', b.kind, b.from === 0 && 'from-left', !b.to && 'to-right'].filter(Boolean).join(' ');
  el.style.top = `${b.row * ROW + 7}px`;
  el.style.left = `${b.from}px`;
  if (b.to) el.style.width = `${b.to - b.from}px`;
  document.getElementById('canvas').append(el);
}
```
